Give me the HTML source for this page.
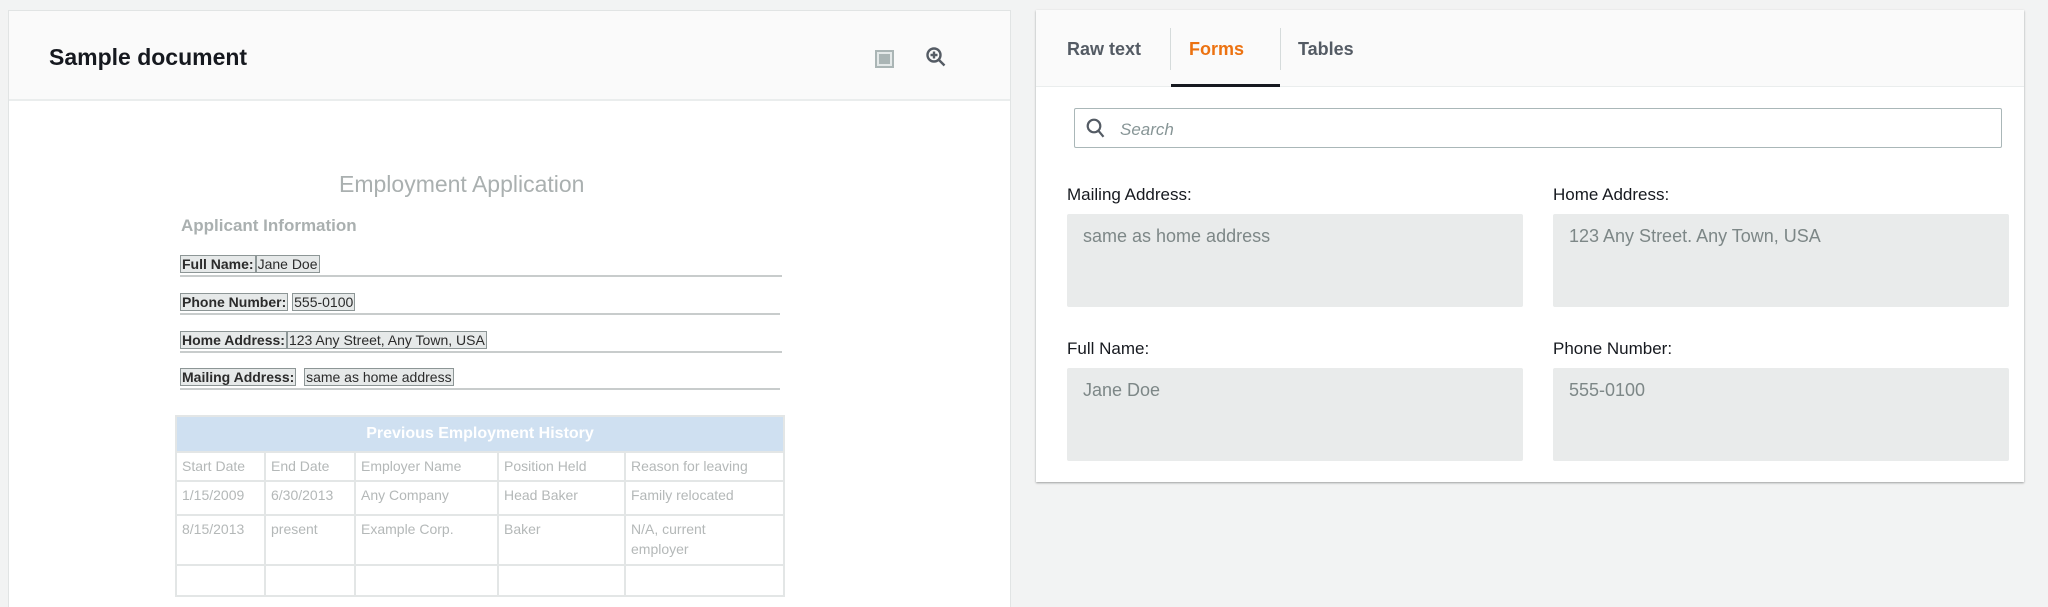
<!DOCTYPE html>
<html style="height:607px;overflow:hidden"><head><meta charset="utf-8"><style>
*{box-sizing:border-box;margin:0;padding:0}
body{width:2048px;height:607px;overflow:hidden;background:#f2f3f3;font-family:"Liberation Sans",sans-serif;position:relative}
.abs{position:absolute}
.lp{left:8px;top:10px;width:1003px;height:597px;background:#fff;border:1px solid #e1e4e4;border-bottom:none}
.lh{left:0;top:0;width:1001px;height:90px;background:#fafafa;border-bottom:2px solid #eaeded}
.g{color:#aab0b0}
.hl{background:#e6e9e9;border:1.5px solid #8d9696;color:#2b2b2b;padding:0 1px}
.fl{position:absolute;left:179px;width:602px;border-bottom:2px solid #c8cccc;height:22px;font-size:14px;line-height:18px}
table{border-collapse:collapse;position:absolute;font-size:14px;color:#b4b8b8;table-layout:fixed}
td{border:2px solid #e3e6e6;padding:3px 5px;vertical-align:top;line-height:20px}
.rp{left:1036px;top:10px;width:988px;height:472px;background:#fff;box-shadow:0 1px 2px rgba(0,0,0,.35)}
.tb{left:0;top:0;width:988px;height:77px;background:#fafafa;border-bottom:1px solid #eaeded}
.tab{position:absolute;top:29px;font-size:18px;font-weight:bold;color:#545b64}
.lab{position:absolute;font-size:17px;color:#16191f}
.box{position:absolute;width:456px;height:93px;background:#e9ebeb;border-radius:2px;color:#7d8787;font-size:18px;padding:12px 16px}
</style></head><body>
<div class="abs lp">
 <div class="abs lh">
  <div class="abs" style="left:40px;top:33px;font-size:23px;font-weight:bold;color:#16191f">Sample document</div>
  <div class="abs" style="left:866px;top:39px;width:19px;height:18px;background:#aab5b5;border:2px solid #aab5b5;box-shadow:inset 0 0 0 2px #e4e9e9"></div>
  <svg class="abs" style="left:917px;top:36px" width="22" height="20" viewBox="0 0 22 20"><circle cx="8" cy="8" r="6.5" fill="none" stroke="#545b64" stroke-width="2.4"/><path d="M8 4.5v7M4.5 8h7M12.5 12.5l6 6" stroke="#545b64" stroke-width="2.4" fill="none"/></svg>
 </div>
 <div class="abs g" style="left:330px;top:160px;font-size:23px">Employment Application</div>
 <div class="abs g" style="left:172px;top:205px;font-size:17px;font-weight:bold">Applicant Information</div>
 <div class="fl" style="top:244px;left:171px"><b class="hl">Full Name:</b><span class="hl">Jane Doe</span></div>
 <div class="fl" style="top:282px;left:171px;width:600px"><b class="hl">Phone Number:</b> <span class="hl">555-0100</span></div>
 <div class="fl" style="top:320px;left:171px"><b class="hl">Home Address:</b><span class="hl">123 Any Street, Any Town, USA</span></div>
 <div class="fl" style="top:357px;left:171px;width:600px"><b class="hl">Mailing Address:</b> &nbsp;<span class="hl">same as home address</span></div>
 <table style="left:166px;top:404px;width:610px">
  <colgroup><col style="width:89px"><col style="width:90px"><col style="width:143px"><col style="width:127px"><col></colgroup>
  <tr><td colspan="5" style="background:#cfe0f1;color:#fff;font-weight:bold;text-align:center;height:36px;font-size:16px;padding-top:7px">Previous Employment History</td></tr>
  <tr style="height:29px"><td>Start Date</td><td>End Date</td><td>Employer Name</td><td>Position Held</td><td>Reason for leaving</td></tr>
  <tr style="height:34px"><td>1/15/2009</td><td>6/30/2013</td><td>Any Company</td><td>Head Baker</td><td>Family relocated</td></tr>
  <tr style="height:50px"><td>8/15/2013</td><td>present</td><td>Example Corp.</td><td>Baker</td><td>N/A, current<br>employer</td></tr>
  <tr style="height:31px"><td></td><td></td><td></td><td></td><td></td></tr>
 </table>
</div>
<div class="abs rp">
 <div class="abs tb">
  <div class="tab" style="left:31px">Raw text</div>
  <div class="abs" style="left:134px;top:18px;width:1px;height:42px;background:#d5dbdb"></div>
  <div class="tab" style="left:153px;color:#ec7211">Forms</div>
  <div class="abs" style="left:244px;top:18px;width:1px;height:42px;background:#d5dbdb"></div>
  <div class="tab" style="left:262px">Tables</div>
  <div class="abs" style="left:135px;top:74px;width:109px;height:3px;background:#16191f"></div>
 </div>
 <div class="abs" style="left:38px;top:98px;width:928px;height:40px;border:1.5px solid #aab7b8;border-radius:2px"></div>
 <svg class="abs" style="left:50px;top:108px" width="20" height="22" viewBox="0 0 20 22"><circle cx="8" cy="8" r="6.3" fill="none" stroke="#545b64" stroke-width="2.2"/><path d="M12.5 12.8l5 6" stroke="#545b64" stroke-width="2.2"/></svg>
 <div class="abs" style="left:84px;top:110px;font-size:17px;font-style:italic;color:#879596">Search</div>
 <div class="lab" style="left:31px;top:175px">Mailing Address:</div>
 <div class="lab" style="left:517px;top:175px">Home Address:</div>
 <div class="box" style="left:31px;top:204px">same as home address</div>
 <div class="box" style="left:517px;top:204px">123 Any Street. Any Town, USA</div>
 <div class="lab" style="left:31px;top:329px">Full Name:</div>
 <div class="lab" style="left:517px;top:329px">Phone Number:</div>
 <div class="box" style="left:31px;top:358px">Jane Doe</div>
 <div class="box" style="left:517px;top:358px">555-0100</div>
</div>
</body></html>
